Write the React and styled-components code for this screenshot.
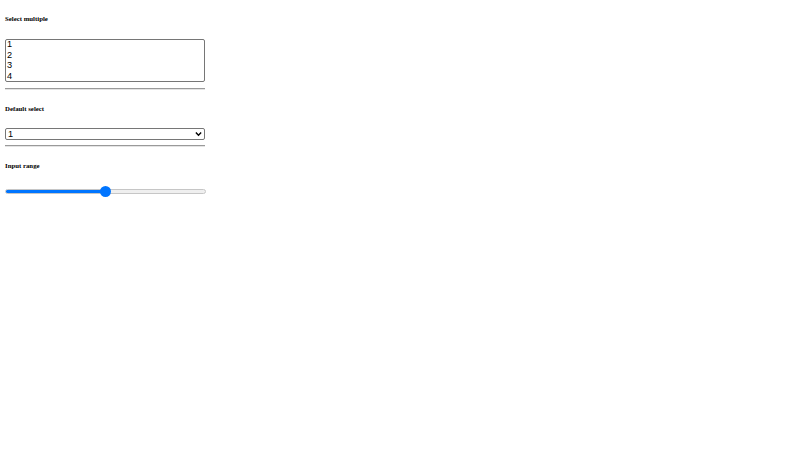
import React, { useState } from 'react'
import styled, { createGlobalStyle } from 'styled-components'

const GlobalStyle = createGlobalStyle`
  html, body {
    margin: 0;
    padding: 0;
    background: #ffffff;
  }
  body {
    font-family: 'Liberation Serif', 'Times New Roman', serif;
  }
`

const Page = styled.div`
  display: flex;
  flex-direction: column;
  align-items: flex-start;
  width: 201px;
  padding: 15px 5px 0 5px;
`

const Heading = styled.h5`
  margin: 0;
  font-family: 'Liberation Serif', 'Times New Roman', serif;
  font-weight: 700;
  font-size: 6.8px;
  line-height: 8px;
  height: 8px;
  color: #000;
  margin-top: ${(p) => p.$top || 0}px;
`

const ListBox = styled.select`
  box-sizing: border-box;
  width: 200px;
  height: 43px;
  margin: 16px 0 0 0;
  padding: 0 1px;
  border: 1px solid #767676;
  border-radius: 2px;
  background: #fff;
  font-family: 'Liberation Sans', Arial, sans-serif;
  font-size: 9.2px;
  color: #000;
  overflow: hidden;
  outline: none;

  option {
    padding: 0;
    height: 10.5px;
    line-height: 10.5px;
    font-size: 9.2px;
    margin-top: -0.5px;
  }
  option:first-child {
    margin-top: -1px;
  }
`

const SelectWrap = styled.div`
  position: relative;
  width: 200px;
  margin-top: 15px;
`

const DropSelect = styled.select`
  appearance: none;
  -webkit-appearance: none;
  box-sizing: border-box;
  display: block;
  width: 200px;
  height: 12px;
  margin: 0;
  padding: 0 2px;
  border: 1px solid #767676;
  border-radius: 2px;
  background: #fff;
  font-family: 'Liberation Sans', Arial, sans-serif;
  font-size: 9.2px;
  line-height: 10px;
  color: #000;
  outline: none;
`

const Chevron = styled.svg`
  position: absolute;
  right: 3px;
  top: 3px;
  width: 7px;
  height: 6px;
  pointer-events: none;
`

const Rule = styled.hr`
  box-sizing: border-box;
  width: 200px;
  margin: ${(p) => p.$top}px 0 0 0;
  border: none;
  border-top: 1px solid #9a9a9a;
  border-bottom: 1px solid #e4e4e4;
  height: 2px;
`

const Range = styled.input`
  -webkit-appearance: none;
  appearance: none;
  width: 201px;
  height: 11px;
  margin: 16px 0 0 0;
  padding: 0;
  background: transparent;
  outline: none;

  &::-webkit-slider-runnable-track {
    height: 5px;
    box-sizing: border-box;
    border-radius: 3px;
    border: 1px solid #c6c6c6;
    background: ${(p) =>
      `linear-gradient(to right, #0075ff 0%, #0075ff ${p.$pct}%, #efefef ${p.$pct}%, #efefef 100%)`};
  }
  &::-webkit-slider-thumb {
    -webkit-appearance: none;
    appearance: none;
    width: 11px;
    height: 11px;
    margin-top: -4px;
    border-radius: 50%;
    background: #0075ff;
    border: none;
  }
`

export default function App() {
  const [value, setValue] = useState(50)
  return (
    <>
      <GlobalStyle />
      <Page>
        <Heading>Select multiple</Heading>
        <ListBox multiple size={4} defaultValue={[]}>
          <option>1</option>
          <option>2</option>
          <option>3</option>
          <option>4</option>
        </ListBox>
        <Rule $top={6} />

        <Heading $top={15}>Default select</Heading>
        <SelectWrap>
          <DropSelect defaultValue="1">
            <option>1</option>
            <option>2</option>
            <option>3</option>
            <option>4</option>
          </DropSelect>
          <Chevron viewBox="0 0 8 6">
            <path d="M1 1.2 L4 4.4 L7 1.2" fill="none" stroke="#000" strokeWidth="1.6" />
          </Chevron>
        </SelectWrap>
        <Rule $top={5} />

        <Heading $top={15}>Input range</Heading>
        <Range
          type="range"
          min={0}
          max={100}
          value={value}
          $pct={value}
          onChange={(e) => setValue(Number(e.target.value))}
        />
      </Page>
    </>
  )
}
